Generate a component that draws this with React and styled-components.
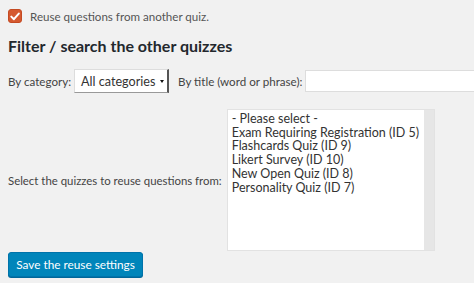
import React from "react";
import styled, { createGlobalStyle } from "styled-components";

const Global = createGlobalStyle`
  html, body { margin: 0; padding: 0; background: #f1f1f1; }
  body { font-family: Lato, "Noto Sans", sans-serif; color: #444; }
`;

const Page = styled.div`
  width: 474px;
  height: 283px;
  overflow: hidden;
  box-sizing: border-box;
  padding: 9px 0 0 8px;
`;

const CheckRow = styled.label`
  display: flex;
  align-items: center;
  gap: 8px;
  height: 14px;
  font-size: 11.6px;
  color: #555;
`;

const CheckBox = styled.span`
  width: 14px;
  height: 14px;
  box-sizing: border-box;
  border-radius: 3px;
  background: #d5592f;
  border: 1px solid #c44a22;
  display: flex;
  align-items: center;
  justify-content: center;
`;

const Heading = styled.h2`
  margin: 13px 0 0 0;
  font-size: 16px;
  font-weight: 700;
  color: #23282d;
  line-height: 20px;
`;

const FilterRow = styled.div`
  display: flex;
  align-items: center;
  margin-top: 13px;
  height: 24px;
  font-size: 11.6px;
  color: #444;
`;

const Label = styled.span`
  white-space: nowrap;
`;

const Select = styled.div`
  margin-left: 3px;
  width: 95px;
  height: 24px;
  box-sizing: border-box;
  background: #fff;
  border: 1px solid #ddd;
  border-right: 2px solid #555;
  border-bottom: 1px solid #999;
  display: flex;
  align-items: center;
  justify-content: space-between;
  padding: 0 3px 0 6px;
  font-size: 12.6px;
  color: #333;
  white-space: nowrap;
`;

const Arrow = styled.span`
  width: 0;
  height: 0;
  border-left: 2.5px solid transparent;
  border-right: 2.5px solid transparent;
  border-top: 3px solid #111;
`;

const TitleLabel = styled(Label)`
  margin-left: 9px;
`;

const TextInput = styled.div`
  margin-left: 3px;
  flex: 1;
  height: 22px;
  box-sizing: border-box;
  background: #fff;
  border: 1px solid #ddd;
  border-right: none;
`;

const SelectRow = styled.div`
  display: flex;
  align-items: center;
  margin-top: 16px;
  font-size: 11.4px;
  color: #444;
`;

const ListBox = styled.div`
  margin-left: 5px;
  width: 208px;
  height: 142px;
  box-sizing: border-box;
  border: 1px solid #e2e2e2;
  display: flex;
  background: #fff;
`;

const Options = styled.div`
  flex: 1;
  padding: 2px 4px;
  font-size: 12.5px;
  line-height: 13.7px;
  color: #333;
  white-space: nowrap;
`;

const Scrollbar = styled.div`
  width: 10px;
  background: #e6e6e6;
`;

const Button = styled.button`
  margin-top: 1px;
  height: 25px;
  width: 135px;
  box-sizing: border-box;
  background: #0085ba;
  border: 1px solid #0073aa;
  border-radius: 3px;
  box-shadow: 0 1px 0 #006799;
  color: #fff;
  font-family: Lato, "Noto Sans", sans-serif;
  font-size: 11.8px;
  padding: 0;
`;

const options = [
  "- Please select -",
  "Exam Requiring Registration (ID 5)",
  "Flashcards Quiz (ID 9)",
  "Likert Survey (ID 10)",
  "New Open Quiz (ID 8)",
  "Personality Quiz (ID 7)",
];

export default function App() {
  return (
    <Page>
      <Global />
      <CheckRow>
        <CheckBox>
          <svg width="10" height="9" viewBox="0 0 10 9">
            <path d="M1.3 4.6 L3.9 7.2 L8.8 1.6" fill="none" stroke="#fff" strokeWidth="2" strokeLinecap="round" strokeLinejoin="round" />
          </svg>
        </CheckBox>
        Reuse questions from another quiz.
      </CheckRow>
      <Heading>Filter / search the other quizzes</Heading>
      <FilterRow>
        <Label>By category:</Label>
        <Select>
          All categories
          <Arrow />
        </Select>
        <TitleLabel>By title (word or phrase):</TitleLabel>
        <TextInput />
      </FilterRow>
      <SelectRow>
        <Label>Select the quizzes to reuse questions from:</Label>
        <ListBox>
          <Options>
            {options.map((o) => (
              <div key={o}>{o}</div>
            ))}
          </Options>
          <Scrollbar />
        </ListBox>
      </SelectRow>
      <Button>Save the reuse settings</Button>
    </Page>
  );
}
